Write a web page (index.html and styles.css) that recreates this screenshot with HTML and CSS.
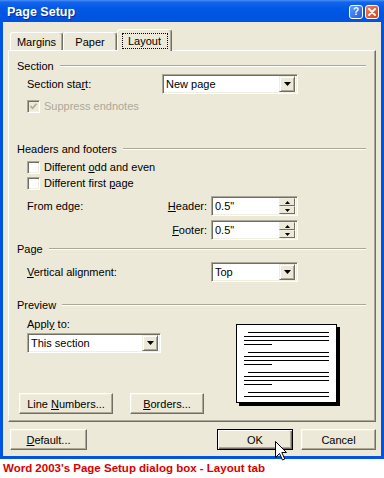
FILE: index.html
```html
<!DOCTYPE html>
<html>
<head>
<meta charset="utf-8">
<title>Page Setup</title>
<link rel="stylesheet" href="styles.css">
</head>
<body>
<div class="window">
  <div class="titlebar">
    <span class="title">Page Setup</span>
    <div class="tb-buttons">
      <span class="tb-btn help">?</span>
      <span class="tb-btn close"><svg width="8" height="8" viewBox="0 0 8 8"><path d="M1 1 L7 7 M7 1 L1 7" stroke="#fff" stroke-width="1.8" stroke-linecap="round"/></svg></span>
    </div>
  </div>
  <div class="client">
    <div class="tabs">
      <div class="tab margins"><span>Margins</span></div>
      <div class="tab paper"><span>Paper</span></div>
      <div class="tab active"><span class="focus"><span>Layout</span></span></div>
    </div>
    <div class="panel">
      <div class="ghead g-section"><span>Section</span><i class="rule"></i></div>
      <div class="row indent r-start">
        <span class="lbl w-start">Section sta<u>r</u>t:</span>
        <div class="combo w-start-combo"><span class="val">New page</span><span class="drop"><svg width="7" height="4" viewBox="0 0 7 4"><path d="M0 0H7L3.5 4Z" fill="#000"/></svg></span></div>
      </div>
      <div class="row indent r-suppress">
        <span class="cb disabled"><svg width="9" height="9" viewBox="0 0 9 9"><path d="M1.5 4 L3.5 6.2 L7.5 1.8" fill="none" stroke="#ACA899" stroke-width="1.6"/></svg></span>
        <span class="cb-text dis">Suppress endnotes</span>
      </div>

      <div class="ghead g-hf"><span>Headers and footers</span><i class="rule"></i></div>
      <div class="row indent r-odd">
        <span class="cb"></span>
        <span class="cb-text">Different <u>o</u>dd and even</span>
      </div>
      <div class="row indent r-first">
        <span class="cb"></span>
        <span class="cb-text">Different first <u>p</u>age</span>
      </div>
      <div class="row indent r-header">
        <span class="lbl w-from">From edge:</span>
        <span class="lbl w-spin"><u>H</u>eader:</span>
        <div class="spin"><span class="val">0.5"</span><span class="spin-btns"><span class="sb"><svg width="5" height="3" viewBox="0 0 5 3"><path d="M2.5 0L5 3H0Z" fill="#000"/></svg></span><span class="sb"><svg width="5" height="3" viewBox="0 0 5 3"><path d="M0 0H5L2.5 3Z" fill="#000"/></svg></span></span></div>
      </div>
      <div class="row indent r-footer">
        <span class="lbl w-from"></span>
        <span class="lbl w-spin"><u>F</u>ooter:</span>
        <div class="spin"><span class="val">0.5"</span><span class="spin-btns"><span class="sb"><svg width="5" height="3" viewBox="0 0 5 3"><path d="M2.5 0L5 3H0Z" fill="#000"/></svg></span><span class="sb"><svg width="5" height="3" viewBox="0 0 5 3"><path d="M0 0H5L2.5 3Z" fill="#000"/></svg></span></span></div>
      </div>

      <div class="ghead g-page"><span>Page</span><i class="rule"></i></div>
      <div class="row indent r-valign">
        <span class="lbl w-valign"><u>V</u>ertical alignment:</span>
        <div class="combo w-small"><span class="val">Top</span><span class="drop"><svg width="7" height="4" viewBox="0 0 7 4"><path d="M0 0H7L3.5 4Z" fill="#000"/></svg></span></div>
      </div>

      <div class="ghead g-preview"><span>Preview</span><i class="rule"></i></div>
      <div class="preview">
        <div class="pv-left">
          <div class="apply"><span>Appl<u>y</u> to:</span></div>
          <div class="combo w-apply"><span class="val">This section</span><span class="drop"><svg width="7" height="4" viewBox="0 0 7 4"><path d="M0 0H7L3.5 4Z" fill="#000"/></svg></span></div>
          <div class="pv-buttons">
            <div class="btn w-line"><span>Line <u>N</u>umbers...</span></div>
            <div class="btn w-borders"><span><u>B</u>orders...</span></div>
          </div>
        </div>
        <div class="page">
          <svg width="99" height="77" viewBox="0 0 99 77">
            <g stroke="#000" stroke-width="1">
              <path d="M11 7.5H92 M7 11.5H92 M7 15.5H92 M7 19.5H35"/>
              <path d="M11 27.5H92 M7 31.5H92 M7 35.5H92 M7 39.5H35"/>
              <path d="M11 47.5H92 M7 51.5H92 M7 55.5H92 M7 59.5H35"/>
              <path d="M11 67.5H92 M7 71.5H92"/>
            </g>
          </svg>
        </div>
      </div>
    </div>
    <div class="footer">
      <div class="btn w-default"><span><u>D</u>efault...</span></div>
      <div class="right-btns">
        <div class="btn default w-ok"><span>OK</span></div>
        <div class="btn w-cancel"><span>Cancel</span></div>
      </div>
    </div>
  </div>
</div>
<div class="caption">Word 2003's Page Setup dialog box - Layout tab</div>
<svg class="cursor" width="13" height="20" viewBox="0 0 13 20"><path d="M0.5 0.5 L0.5 16.5 L4.5 12.5 L7.5 19 L9.8 18 L6.8 11.5 L11.5 11.5 Z" fill="#fff" stroke="#000" stroke-width="1" stroke-linejoin="miter"/></svg>
</body>
</html>
```

FILE: styles.css
```css
* { box-sizing: border-box; margin: 0; padding: 0; }
html, body { background: #fff; }
body {
  margin: 0;
  width: 384px;
  height: 478px;
  overflow: hidden;
  position: relative;
  font-family: "Liberation Sans", Arial, sans-serif;
  font-size: 11px;
  color: #000;
}
u { text-decoration: underline; text-underline-offset: 1px; }

.window { width: 384px; height: 459px; display: flex; flex-direction: column; }

.titlebar {
  height: 22px;
  flex: none;
  display: flex;
  align-items: center;
  justify-content: space-between;
  padding: 1px 5px 0 7px;
  background: linear-gradient(#4A93F6 0, #1565EB 2px, #0058E6 40%, #0053DD 100%);
}
.title { color: #fff; font-weight: bold; font-size: 12.5px; text-shadow: 1px 1px 0 #0A2D95; }
.tb-buttons { display: flex; gap: 2px; }
.tb-btn {
  width: 14px; height: 14px;
  border: 1px solid #fff;
  border-radius: 3px;
  display: flex; align-items: center; justify-content: center;
  color: #fff; font-weight: bold; font-size: 10px;
}
.help { background: linear-gradient(135deg, #5C9BF8, #1E5EE3); }
.close { background: linear-gradient(135deg, #EE8060, #D2421C); }

.client {
  flex: 1;
  background: #ECE9D8;
  border: 3px solid #0054E3;
  border-top: 0;
  padding: 7px 5px 0 5px;
  display: flex;
  flex-direction: column;
}

.tabs { display: flex; align-items: flex-end; height: 21px; padding-left: 2px; position: relative; z-index: 1; flex: none; }
.tab {
  height: 18px;
  display: flex; align-items: center; justify-content: center;
  border: 1px solid #fff;
  border-bottom: 0;
  border-right-color: #716F64;
  box-shadow: inset -1px 0 #ACA899;
  border-radius: 3px 3px 0 0;
  background: #ECE9D8;
}
.tab.margins { width: 53px; }
.tab.paper { width: 54px; }
.tab.active { width: 55px; height: 22px; margin-bottom: -1px; align-items: flex-start; padding-top: 3px; }
.focus { border: 1px dotted #000; width: 46px; height: 16px; display: flex; align-items: center; justify-content: center; }

.panel {
  height: 372px;
  flex: none;
  border: 1px solid #fff;
  border-right-color: #716F64;
  border-bottom-color: #716F64;
  box-shadow: inset -1px -1px #ACA899;
  padding: 0 9px 0 8px;
  display: flex;
  flex-direction: column;
}

.ghead { display: flex; align-items: center; height: 14px; flex: none; }
.ghead .rule { flex: 1; height: 2px; margin-left: 6px; border-top: 1px solid #ACA899; border-bottom: 1px solid #fff; }

.row { display: flex; align-items: center; flex: none; }
.indent { padding-left: 10px; }

.g-section { margin-top: 8px; }
.r-start { margin-top: 1px; height: 20px; }
.r-suppress { margin-top: 5px; height: 14px; }
.g-hf { margin-top: 29px; }
.r-odd { margin-top: 4px; height: 14px; }
.r-first { margin-top: 2px; height: 14px; }
.r-header { margin-top: 6px; height: 20px; }
.r-footer { margin-top: 4px; height: 20px; }
.g-page { margin-top: 2px; }
.r-valign { margin-top: 6px; height: 20px; }
.g-preview { margin-top: 16px; }

.lbl { flex: none; }
.w-start { width: 135px; }
.w-from { width: 130px; }
.w-spin { width: 50px; text-align: right; margin-right: 4px; }
.w-valign { width: 184px; }

.combo, .spin {
  height: 20px;
  display: flex;
  align-items: center;
  background: #fff;
  border: 1px solid;
  border-color: #ACA899 #fff #fff #ACA899;
  box-shadow: inset 1px 1px #716F64, inset -1px -1px #F1EFE2;
  padding: 2px;
  flex: none;
}
.combo .val, .spin .val { flex: 1; padding-left: 1px; white-space: nowrap; }
.w-start-combo { width: 136px; }
.w-small { width: 87px; }
.spin { width: 87px; }
.w-apply { width: 134px; }

.drop {
  width: 16px; height: 16px;
  background: #ECE9D8;
  border: 1px solid;
  border-color: #F1EFE2 #716F64 #716F64 #F1EFE2;
  box-shadow: inset 1px 1px #fff, inset -1px -1px #ACA899;
  display: flex; align-items: center; justify-content: center;
}
.spin-btns { width: 16px; height: 16px; display: flex; flex-direction: column; }
.sb {
  height: 8px;
  background: #ECE9D8;
  border: 1px solid;
  border-color: #F1EFE2 #716F64 #716F64 #F1EFE2;
  display: flex; align-items: center; justify-content: center;
}
.sb svg { display: block; }

.cb {
  width: 13px; height: 13px; flex: none;
  background: #fff;
  border: 1px solid;
  border-color: #ACA899 #fff #fff #ACA899;
  box-shadow: inset 1px 1px #716F64, inset -1px -1px #F1EFE2;
  display: flex; align-items: center; justify-content: center;
}
.cb.disabled { background: #ECE9D8; }
.cb-text { margin-left: 4px; }
.dis { color: #ACA899; }

.preview { flex: 1; display: flex; }
.pv-left { width: 219px; display: flex; flex-direction: column; flex: none; }
.apply { margin: 5px 0 0 10px; height: 14px; display: flex; align-items: center; }
.pv-left .combo { margin: 2px 0 0 10px; }
.pv-buttons { display: flex; gap: 17px; margin: 40px 0 0 2px; }

.page {
  margin-top: 12px;
  width: 101px; height: 79px;
  background: #fff;
  border: 1px solid #000;
  box-shadow: 3px 3px 0 #000;
}
.page svg { display: block; }

.btn {
  height: 21px;
  display: flex; align-items: center; justify-content: center;
  background: #ECE9D8;
  border: 1px solid;
  border-color: #fff #716F64 #716F64 #fff;
  box-shadow: inset -1px -1px #ACA899, inset 1px 1px #F1EFE2;
  flex: none;
}
.btn.default {
  border-color: #000;
  box-shadow: inset 1px 1px #fff, inset -1px -1px #716F64, inset -2px -2px #ACA899;
}
.w-line { width: 94px; }
.w-borders { width: 74px; }
.w-default { width: 77px; }
.w-ok { width: 76px; }
.w-cancel { width: 75px; }

.footer { display: flex; justify-content: space-between; margin-top: 7px; padding-left: 2px; flex: none; }
.right-btns { display: flex; gap: 8px; }

.caption {
  height: 19px;
  line-height: 19px;
  padding-left: 3px;
  color: #D90000;
  font-weight: bold;
  font-size: 11.5px;
}

.cursor { position: absolute; left: 275px; top: 441px; }
```
